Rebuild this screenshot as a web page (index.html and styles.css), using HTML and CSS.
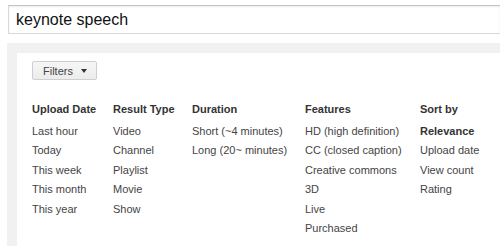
FILE: index.html
```html
<!DOCTYPE html>
<html>
<head>
<meta charset="utf-8">
<link rel="stylesheet" href="styles.css">
</head>
<body>
<div class="search">keynote speech</div>
<div class="panel">
  <div class="inner">
    <button class="filters">Filters <span class="caret"></span></button>
    <div class="cols">
      <div class="col c1">
        <div class="head">Upload Date</div>
        <div>Last hour</div><div>Today</div><div>This week</div><div>This month</div><div>This year</div>
      </div>
      <div class="col c2">
        <div class="head">Result Type</div>
        <div>Video</div><div>Channel</div><div>Playlist</div><div>Movie</div><div>Show</div>
      </div>
      <div class="col c3">
        <div class="head">Duration</div>
        <div>Short (~4 minutes)</div><div>Long (20~ minutes)</div>
      </div>
      <div class="col c4">
        <div class="head">Features</div>
        <div>HD (high definition)</div><div>CC (closed caption)</div><div>Creative commons</div><div>3D</div><div>Live</div><div>Purchased</div>
      </div>
      <div class="col c5">
        <div class="head">Sort by</div>
        <div class="sel">Relevance</div><div>Upload date</div><div>View count</div><div>Rating</div>
      </div>
    </div>
  </div>
</div>
</body>
</html>
```
FILE: styles.css
```css
html, body { margin: 0; padding: 0; background: #fff; overflow: hidden; }
body { font-family: "Liberation Sans", Arial, sans-serif; width: 500px; height: 246px; }
.search {
  margin: 5px 0 0 8px;
  height: 27px;
  border: 1px solid #d9d9d9;
  border-right: none;
  border-top-color: #c4c4c4;
  box-shadow: inset 0 1px 2px rgba(0,0,0,0.08);
  font-size: 16px;
  line-height: 27px;
  padding-left: 7px;
  color: #111;
}
.panel {
  margin: 9px 0 0 7px;
  background: #f1f1f1;
  padding: 10px 0 0 10px;
  height: 193px;
}
.inner {
  background: #fff;
  height: 100%;
  box-sizing: border-box;
  padding: 8px 0 0 15px;
}
.filters {
  display: flex;
  align-items: center;
  width: 65px;
  height: 19px;
  box-sizing: border-box;
  margin: 0;
  padding: 0 0 0 10px;
  border: 1px solid #cfcfcf;
  border-radius: 2px;
  background: linear-gradient(#f6f6f6, #ececec);
  font-family: "Liberation Sans", Arial, sans-serif;
  font-size: 11px;
  color: #444;
  gap: 8px;
}
.caret {
  width: 0; height: 0;
  border-left: 3.5px solid transparent;
  border-right: 3.5px solid transparent;
  border-top: 4px solid #333;
}
.cols {
  display: flex;
  margin-top: 20px;
  font-size: 11px;
  line-height: 19.5px;
  color: #444;
}
.head { font-weight: bold; color: #333; margin-bottom: 2px; }
.sel { font-weight: bold; color: #333; }
.c1 { width: 81px; }
.c2 { width: 79px; }
.c3 { width: 113px; }
.c4 { width: 115px; }
```
